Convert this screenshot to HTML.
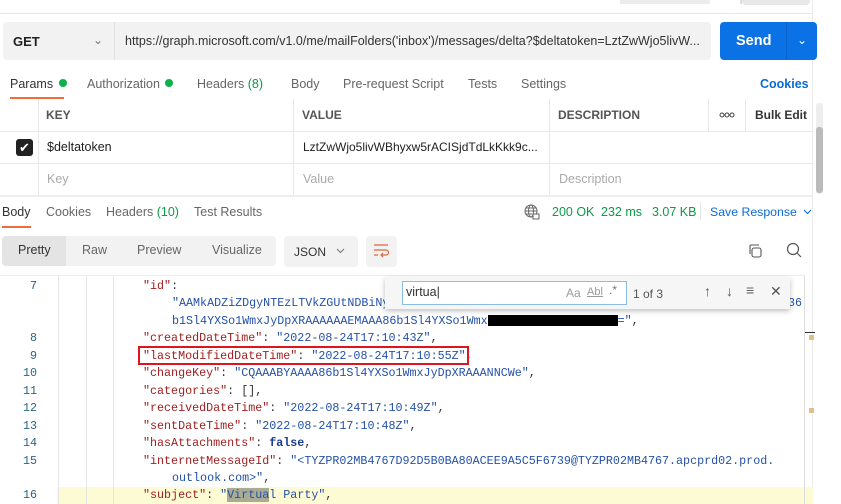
<!DOCTYPE html>
<html><head><style>
*{margin:0;padding:0;box-sizing:border-box}
html,body{width:841px;height:504px;overflow:hidden}
body{background:#fff;font-family:"Liberation Sans",sans-serif;font-size:12.5px;color:#212121;position:relative}
.a{position:absolute;white-space:nowrap}
.code{font-family:"Liberation Mono",monospace;font-size:11.7px}
.k{color:#a11f1f}.s{color:#2451a8}.p{color:#333}.n{color:#2a6484}
.g{color:#0a9b48}
.dot{display:inline-block;width:8px;height:8px;border-radius:50%;background:#0cb14b;vertical-align:1px;margin-left:2px}
</style></head><body>
<div class="a" style="left:0;top:13px;width:812px;height:1px;background:#e6e6e6"></div>
<div class="a" style="left:812px;top:0;width:1px;height:504px;background:#ececec"></div>
<div class="a" style="left:620px;top:0;width:90px;height:4px;background:#ececec"></div>
<div class="a" style="left:740px;top:0;width:2px;height:4px;background:#ddd"></div>
<div class="a" style="left:742px;top:0;width:68px;height:5px;background:#e8e8e8;border-radius:0 0 4px 4px"></div>
<!-- URL bar -->
<div class="a" style="left:3px;top:22px;width:708px;height:38px;background:#f2f2f2;border-radius:4px"></div>
<div class="a" style="left:114px;top:22px;width:1px;height:38px;background:#e2e2e2"></div>
<div class="a" style="left:13px;top:34px;font-weight:bold;font-size:13px">GET</div>
<div class="a" style="left:93px;top:33px;color:#777;font-size:12px">&#8964;</div>
<div class="a" style="left:125px;top:34px;font-size:12.5px;color:#333">https://graph.microsoft.com/v1.0/me/mailFolders('inbox')/messages/delta?$deltatoken=LztZwWjo5livW...</div>
<div class="a" style="left:720px;top:22px;width:97px;height:38px;background:#0b72e6;border-radius:4px"></div>
<div class="a" style="left:786px;top:22px;width:1px;height:38px;background:#0a63c8"></div>
<div class="a" style="left:736px;top:33px;color:#fff;font-weight:bold;font-size:14.5px">Send</div>
<div class="a" style="left:797px;top:33px;color:#fff;font-size:12px">&#8964;</div>
<!-- tabs -->
<div class="a" style="left:10px;top:77px;color:#333">Params <span class="dot"></span></div>
<div class="a" style="left:10px;top:97px;width:54px;height:2px;background:#f26b3a"></div>
<div class="a" style="left:87px;top:77px;color:#666">Authorization <span class="dot"></span></div>
<div class="a" style="left:197px;top:77px;color:#666">Headers <span class="g">(8)</span></div>
<div class="a" style="left:291px;top:77px;color:#666">Body</div>
<div class="a" style="left:343px;top:77px;color:#666">Pre-request Script</div>
<div class="a" style="left:468px;top:77px;color:#666">Tests</div>
<div class="a" style="left:521px;top:77px;color:#666">Settings</div>
<div class="a" style="left:760px;top:77px;color:#0b6bd6;font-weight:bold">Cookies</div>
<!-- table -->
<div class="a" style="left:0;top:131px;width:812px;height:1px;background:#e8e8e8"></div>
<div class="a" style="left:0;top:163px;width:812px;height:1px;background:#e8e8e8"></div>
<div class="a" style="left:0;top:195px;width:812px;height:2px;background:#eee"></div>
<div class="a" style="left:38px;top:99px;width:1px;height:96px;background:#e8e8e8"></div>
<div class="a" style="left:293px;top:99px;width:1px;height:96px;background:#e8e8e8"></div>
<div class="a" style="left:549px;top:99px;width:1px;height:96px;background:#e8e8e8"></div>
<div class="a" style="left:708px;top:99px;width:1px;height:32px;background:#e8e8e8"></div>
<div class="a" style="left:745px;top:99px;width:1px;height:32px;background:#e8e8e8"></div>
<div class="a" style="left:46px;top:108px;font-weight:bold;color:#555;font-size:12px">KEY</div>
<div class="a" style="left:302px;top:108px;font-weight:bold;color:#555;font-size:12px">VALUE</div>
<div class="a" style="left:558px;top:108px;font-weight:bold;color:#555;font-size:12px">DESCRIPTION</div>
<svg class="a" style="left:719px;top:112px" width="16" height="6" viewBox="0 0 16 6" fill="none" stroke="#444" stroke-width="1"><circle cx="3" cy="3" r="2"/><circle cx="8" cy="3" r="2"/><circle cx="13" cy="3" r="2"/></svg>
<div class="a" style="left:755px;top:108px;font-weight:bold;color:#333;font-size:12px">Bulk Edit</div>
<div class="a" style="left:16px;top:139px;width:17px;height:17px;background:#222;border-radius:3px;color:#fff;font-size:13px;text-align:center;line-height:17px">✔</div>
<div class="a" style="left:47px;top:140px;font-size:12.5px">$deltatoken</div>
<div class="a" style="left:303px;top:140px;font-size:12px">LztZwWjo5livWBhyxw5rACISjdTdLkKkk9c...</div>
<div class="a" style="left:47px;top:172px;color:#aaa">Key</div>
<div class="a" style="left:303px;top:172px;color:#aaa">Value</div>
<div class="a" style="left:559px;top:172px;color:#aaa">Description</div>
<div class="a" style="left:816px;top:103px;width:7px;height:91px;background:#eee;border-radius:3px"></div>
<div class="a" style="left:816px;top:127px;width:7px;height:66px;background:#bbb;border-radius:3px"></div>
<!-- response tabs -->
<div class="a" style="left:2px;top:205px;color:#333">Body</div>
<div class="a" style="left:2px;top:226px;width:29px;height:2px;background:#f26b3a"></div>
<div class="a" style="left:46px;top:205px;color:#666">Cookies</div>
<div class="a" style="left:106px;top:205px;color:#666">Headers <span class="g">(10)</span></div>
<div class="a" style="left:194px;top:205px;color:#666">Test Results</div>
<svg class="a" style="left:524px;top:204px" width="16" height="16" viewBox="0 0 16 16" fill="none" stroke="#666" stroke-width="1"><circle cx="7" cy="7" r="6"/><ellipse cx="7" cy="7" rx="2.5" ry="6"/><path d="M1 7h12M2 4h10M2 10h6"/><rect x="9" y="10" width="6" height="5" fill="#fff"/></svg>
<div class="a g" style="left:552px;top:205px">200 OK</div>
<div class="a g" style="left:601px;top:205px">232 ms</div>
<div class="a g" style="left:652px;top:205px">3.07 KB</div>
<div class="a" style="left:700px;top:202px;width:1px;height:18px;background:#e6e6e6"></div>
<div class="a" style="left:710px;top:205px;color:#0b6bd6;font-size:12.3px">Save Response</div>
<svg class="a" style="left:803px;top:209px" width="9" height="6" viewBox="0 0 9 6" fill="none" stroke="#0b6bd6" stroke-width="1.1"><path d="M1 1l3.5 3.5L8 1"/></svg>
<!-- toolbar -->
<div class="a" style="left:2px;top:236px;width:274px;height:30px;background:#f2f2f2;border-radius:4px"></div>
<div class="a" style="left:2px;top:236px;width:64px;height:30px;background:#e4e4e4;border-radius:4px 0 0 4px"></div>
<div class="a" style="left:18px;top:243px;color:#333">Pretty</div>
<div class="a" style="left:82px;top:243px;color:#666">Raw</div>
<div class="a" style="left:137px;top:243px;color:#666">Preview</div>
<div class="a" style="left:212px;top:243px;color:#666">Visualize</div>
<div class="a" style="left:284px;top:236px;width:74px;height:31px;background:#f2f2f2;border-radius:4px"></div>
<div class="a" style="left:294px;top:245px;font-size:12px;color:#333">JSON</div>
<svg class="a" style="left:336px;top:248px" width="9" height="6" viewBox="0 0 9 6" fill="none" stroke="#777" stroke-width="1.1"><path d="M1 1l3.5 3.5L8 1"/></svg>
<div class="a" style="left:366px;top:236px;width:31px;height:31px;background:#f2f2f2;border-radius:4px"></div>
<svg class="a" style="left:373px;top:244px" width="16" height="14" viewBox="0 0 16 14" fill="none" stroke="#e0673a" stroke-width="1.2"><path d="M1 1h14M1 6h12a2.5 2.5 0 0 1 0 5H8M10 9l-2 2 2 2M1 11h4"/></svg>
<svg class="a" style="left:747px;top:243px" width="16" height="16" viewBox="0 0 16 16" fill="none" stroke="#555" stroke-width="1.1"><rect x="5" y="5" width="9" height="9" rx="2"/><path d="M3 11V3a1 1 0 0 1 1-1h8"/></svg>
<svg class="a" style="left:786px;top:242px" width="16" height="16" viewBox="0 0 16 16" fill="none" stroke="#555" stroke-width="1.2"><circle cx="7" cy="7" r="5.5"/><path d="M11 11l4 4"/></svg>
<div class="a" style="left:0;top:275px;width:805px;height:1px;background:#eee"></div>
<!-- code -->
<div class="a" style="left:57px;top:487px;width:756px;height:17px;background:#fdfbd4"></div>
<div class="a" style="left:58px;top:276px;width:1px;height:228px;background:#e6e6e6"></div>
<div class="a" style="left:86px;top:276px;width:1px;height:228px;background:#e6e6e6"></div>
<div class="a" style="left:113px;top:276px;width:1px;height:228px;background:#e6e6e6"></div>
<div class="a" style="left:804px;top:276px;width:1px;height:228px;background:#ddd"></div>
<div class="a" style="left:805px;top:332px;width:10px;height:1px;background:#333"></div>
<div class="a" style="left:809px;top:335px;width:5px;height:5px;background:#e0c08a"></div>
<div class="a" style="left:809px;top:408px;width:5px;height:5px;background:#e0c08a"></div>
<div class="a code s" style="left:788px;top:295px;line-height:17.45px">36</div>
<div class="a code" style="left:0;top:278px;line-height:17.45px">
<div><span class="n" style="display:inline-block;width:37px;text-align:right">7</span><span style="display:inline-block;width:106px"></span><span class="k">"id"</span><span class="p">:</span></div>
<div><span style="display:inline-block;width:172px"></span><span class="s">"AAMkADZiZDgyNTEzLTVkZGUtNDBiNy</span></div>
<div><span style="display:inline-block;width:172px"></span><span class="s">b1Sl4YXSo1WmxJyDpXRAAAAAAEMAAA86b1Sl4YXSo1Wmx</span><span style="display:inline-block;width:130px;height:11px;background:#000;vertical-align:middle"></span><span class="s">="</span><span class="p">,</span></div>
<div><span class="n" style="display:inline-block;width:37px;text-align:right">8</span><span style="display:inline-block;width:106px"></span><span class="k">"createdDateTime"</span><span class="p">: </span><span class="s">"2022-08-24T17:10:43Z"</span><span class="p">,</span></div>
<div><span class="n" style="display:inline-block;width:37px;text-align:right">9</span><span style="display:inline-block;width:106px"></span><span class="k">"lastModifiedDateTime"</span><span class="p">: </span><span class="s">"2022-08-24T17:10:55Z"</span><span class="p">,</span></div>
<div><span class="n" style="display:inline-block;width:37px;text-align:right">10</span><span style="display:inline-block;width:106px"></span><span class="k">"changeKey"</span><span class="p">: </span><span class="s">"CQAAABYAAAA86b1Sl4YXSo1WmxJyDpXRAAANNCWe"</span><span class="p">,</span></div>
<div><span class="n" style="display:inline-block;width:37px;text-align:right">11</span><span style="display:inline-block;width:106px"></span><span class="k">"categories"</span><span class="p">: [],</span></div>
<div><span class="n" style="display:inline-block;width:37px;text-align:right">12</span><span style="display:inline-block;width:106px"></span><span class="k">"receivedDateTime"</span><span class="p">: </span><span class="s">"2022-08-24T17:10:49Z"</span><span class="p">,</span></div>
<div><span class="n" style="display:inline-block;width:37px;text-align:right">13</span><span style="display:inline-block;width:106px"></span><span class="k">"sentDateTime"</span><span class="p">: </span><span class="s">"2022-08-24T17:10:48Z"</span><span class="p">,</span></div>
<div><span class="n" style="display:inline-block;width:37px;text-align:right">14</span><span style="display:inline-block;width:106px"></span><span class="k">"hasAttachments"</span><span class="p">: </span><b style="color:#1a3d8f">false</b><span class="p">,</span></div>
<div><span class="n" style="display:inline-block;width:37px;text-align:right">15</span><span style="display:inline-block;width:106px"></span><span class="k">"internetMessageId"</span><span class="p">: </span><span class="s">"&lt;TYZPR02MB4767D92D5B0BA80ACEE9A5C5F6739@TYZPR02MB4767.apcprd02.prod.</span></div>
<div><span style="display:inline-block;width:172px"></span><span class="s">outlook.com&gt;"</span><span class="p">,</span></div>
<div><span class="n" style="display:inline-block;width:37px;text-align:right">16</span><span style="display:inline-block;width:106px"></span><span class="k">"subject"</span><span class="p">: </span><span class="s">"<span style="background:#a9ab94">Virtua</span>l Party"</span><span class="p">,</span></div>
</div>
<div class="a" style="left:138px;top:346px;width:331px;height:19px;border:2px solid #e0141e"></div>
<!-- find widget -->
<div class="a" style="left:385px;top:277px;width:405px;height:32px;background:#f6f6f6;box-shadow:0 2px 5px rgba(0,0,0,.25)"></div>
<div class="a" style="left:402px;top:281px;width:225px;height:24px;background:#fff;border:1px solid #8dbbe8"></div>
<div class="a" style="left:406px;top:285px;font-size:12.5px;color:#333">virtua|</div>
<div class="a" style="left:566px;top:286px;font-size:12px;color:#999">Aa</div>
<div class="a" style="left:587px;top:286px;font-size:11px;color:#999;text-decoration:underline">Abl</div>
<div class="a" style="left:609px;top:283px;font-size:12px;color:#777">.*</div>
<div class="a" style="left:633px;top:287px;font-size:12px;color:#555">1 of 3</div>
<div class="a" style="left:704px;top:283px;font-size:14px;color:#555">↑</div>
<div class="a" style="left:726px;top:283px;font-size:14px;color:#555">↓</div>
<div class="a" style="left:746px;top:282px;font-size:14px;color:#666">≡</div>
<div class="a" style="left:770px;top:283px;font-size:14px;color:#555">✕</div>
</body></html>
